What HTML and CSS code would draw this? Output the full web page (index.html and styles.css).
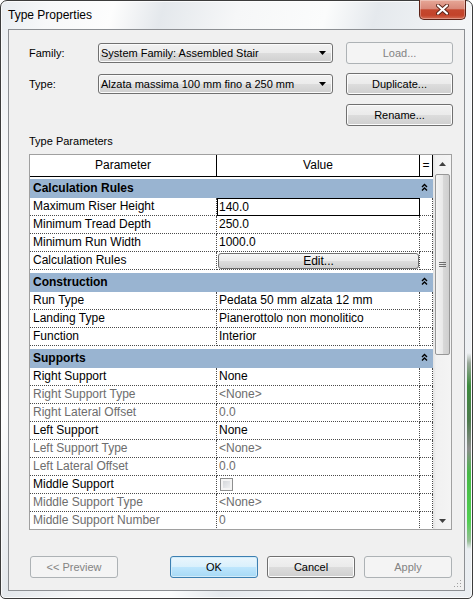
FILE: index.html
```html
<!DOCTYPE html>
<html lang="en">
<head>
  <meta charset="UTF-8">
  <title>Type Properties</title>
  <link rel="stylesheet" href="styles.css">
</head>
<body>

  <div class="window">
    <div class="titlebar">
      <span class="title">Type Properties</span>
      <button class="close-btn" aria-label="Close">
        <svg width="13" height="11" viewBox="0 0 13 11">
          <path d="M2 1.5 L11 9.5 M11 1.5 L2 9.5" stroke="#5a2418" stroke-width="4" stroke-linecap="round"/>
          <path d="M2 1.5 L11 9.5 M11 1.5 L2 9.5" stroke="#ffffff" stroke-width="2.2" stroke-linecap="round"/>
        </svg>
      </button>
    </div>

    <div class="client">
      <div class="top-form">
        <label>Family:</label>
        <div class="combo">
          <span>System Family: Assembled Stair</span>
          <svg width="7" height="4" viewBox="0 0 7 4"><path d="M0 0 H7 L3.5 4 Z" fill="#000"/></svg>
        </div>
        <button class="btn" disabled>Load...</button>

        <label>Type:</label>
        <div class="combo">
          <span>Alzata massima 100 mm fino a 250 mm</span>
          <svg width="7" height="4" viewBox="0 0 7 4"><path d="M0 0 H7 L3.5 4 Z" fill="#000"/></svg>
        </div>
        <button class="btn">Duplicate...</button>

        <span></span>
        <span></span>
        <button class="btn">Rename...</button>
      </div>

      <div class="section-label">Type Parameters</div>

      <div class="grid">
        <div class="grid-table">
          <div class="grid-head">
            <div class="hcell c1">Parameter</div>
            <div class="hcell c2">Value</div>
            <div class="hcell c3">=</div>
          </div>

          <div class="category">
            <span class="cat-name">Calculation Rules</span>
            <span class="cat-toggle"><svg width="7" height="8" viewBox="0 0 7 8"><path d="M1 4 L3.5 1.5 L6 4 M1 7.5 L3.5 5 L6 7.5" stroke="#000" stroke-width="1.4" fill="none"/></svg></span>
          </div>
          <div class="row"><div class="cell c1">Maximum Riser Height</div><div class="cell c2 editing">140.0</div><div class="cell c3"></div></div>
          <div class="row"><div class="cell c1">Minimum Tread Depth</div><div class="cell c2">250.0</div><div class="cell c3"></div></div>
          <div class="row"><div class="cell c1">Minimum Run Width</div><div class="cell c2">1000.0</div><div class="cell c3"></div></div>
          <div class="row"><div class="cell c1">Calculation Rules</div><div class="cell c2 has-btn"><button class="cell-btn">Edit...</button></div><div class="cell c3"></div></div>

          <div class="category">
            <span class="cat-name">Construction</span>
            <span class="cat-toggle"><svg width="7" height="8" viewBox="0 0 7 8"><path d="M1 4 L3.5 1.5 L6 4 M1 7.5 L3.5 5 L6 7.5" stroke="#000" stroke-width="1.4" fill="none"/></svg></span>
          </div>
          <div class="row"><div class="cell c1">Run Type</div><div class="cell c2">Pedata 50 mm alzata 12 mm</div><div class="cell c3"></div></div>
          <div class="row"><div class="cell c1">Landing Type</div><div class="cell c2">Pianerottolo non monolitico</div><div class="cell c3"></div></div>
          <div class="row"><div class="cell c1">Function</div><div class="cell c2">Interior</div><div class="cell c3"></div></div>

          <div class="category">
            <span class="cat-name">Supports</span>
            <span class="cat-toggle"><svg width="7" height="8" viewBox="0 0 7 8"><path d="M1 4 L3.5 1.5 L6 4 M1 7.5 L3.5 5 L6 7.5" stroke="#000" stroke-width="1.4" fill="none"/></svg></span>
          </div>
          <div class="row"><div class="cell c1">Right Support</div><div class="cell c2">None</div><div class="cell c3"></div></div>
          <div class="row disabled"><div class="cell c1">Right Support Type</div><div class="cell c2">&lt;None&gt;</div><div class="cell c3"></div></div>
          <div class="row disabled"><div class="cell c1">Right Lateral Offset</div><div class="cell c2">0.0</div><div class="cell c3"></div></div>
          <div class="row"><div class="cell c1">Left Support</div><div class="cell c2">None</div><div class="cell c3"></div></div>
          <div class="row disabled"><div class="cell c1">Left Support Type</div><div class="cell c2">&lt;None&gt;</div><div class="cell c3"></div></div>
          <div class="row disabled"><div class="cell c1">Left Lateral Offset</div><div class="cell c2">0.0</div><div class="cell c3"></div></div>
          <div class="row"><div class="cell c1">Middle Support</div><div class="cell c2"><span class="check"></span></div><div class="cell c3"></div></div>
          <div class="row disabled"><div class="cell c1">Middle Support Type</div><div class="cell c2">&lt;None&gt;</div><div class="cell c3"></div></div>
          <div class="row disabled"><div class="cell c1">Middle Support Number</div><div class="cell c2">0</div><div class="cell c3"></div></div>
        </div>

        <div class="scrollbar">
          <div class="sb-arrow"><svg width="7" height="4" viewBox="0 0 7 4"><path d="M0 4 H7 L3.5 0 Z" fill="#404040"/></svg></div>
          <div class="sb-thumb">
            <svg width="7" height="6" viewBox="0 0 7 6"><path d="M0 0.5 H7 M0 2.5 H7 M0 4.5 H7" stroke="#6f6f6f" stroke-width="1"/></svg>
          </div>
          <div class="sb-space"></div>
          <div class="sb-arrow"><svg width="7" height="4" viewBox="0 0 7 4"><path d="M0 0 H7 L3.5 4 Z" fill="#404040"/></svg></div>
        </div>
      </div>

      <div class="bottom-bar">
        <button class="btn wide" disabled>&lt;&lt; Preview</button>
        <button class="btn wide btn-default push">OK</button>
        <button class="btn wide">Cancel</button>
        <button class="btn wide" disabled>Apply</button>
      </div>

      <svg class="grip" width="9" height="9" viewBox="0 0 9 9">
        <path d="M7 1h1v1h-1z M4 4h1v1h-1z M7 4h1v1h-1z M1 7h1v1h-1z M4 7h1v1h-1z M7 7h1v1h-1z" fill="#a0a0a0"/>
      </svg>
    </div>
  </div>

</body>
</html>
```

FILE: styles.css
```css
* {
  box-sizing: border-box;
}
body {
  margin: 0;
  font-family: "Liberation Sans", Arial, sans-serif;
  font-size: 11px;
  color: #000;
}

/* window frame */
.window {
  width: 473px;
  height: 599px;
  display: flex;
  flex-direction: column;
  padding: 0 7px 7px 7px;
  border: 1px solid #3c3c3c;
  border-radius: 7px 7px 5px 5px;
  box-shadow: inset 0 0 0 1px rgba(255,255,255,0.75);
  background:
    linear-gradient(180deg, transparent 0, transparent 352px, #9aa89a 362px, #3d8b3d 385px, #4d7a4d 420px, #8d8d8d 448px, #47b847 472px, #52cf52 520px, #96bd96 540px, transparent 548px) right 1px top 0 / 4px 100% no-repeat,
    linear-gradient(105deg, #e9edf1 0%, #f7f8f9 8%, #fdfdfd 18%, #e4e8ec 26%, #f6f7f8 38%, #fbfcfc 52%, #e5e9ed 60%, #f3f5f7 74%, #e9edf1 100%);
}
.titlebar {
  height: 28px;
  display: flex;
  align-items: flex-start;
}
.title {
  font-size: 12px;
  line-height: 16px;
  margin-top: 6px;
}
.close-btn {
  margin-left: auto;
  margin-top: -1px;
  margin-right: -1px;
  width: 47px;
  height: 20px;
  padding: 0;
  border: 1px solid #5b2217;
  border-top: none;
  border-radius: 0 0 5px 5px;
  background: linear-gradient(#e6a797 0%, #d9897a 45%, #c4472e 52%, #c3432a 80%, #d36d55 100%);
  box-shadow: inset 0 0 0 1px rgba(255,255,255,0.3);
  display: flex;
  align-items: center;
  justify-content: center;
}

/* client area */
.client {
  flex: 1;
  position: relative;
  background: #f0f0f0;
  border: 1px solid #8c8f93;
  padding: 0 11px 0 20px;
}
.top-form {
  display: grid;
  grid-template-columns: 69px 235px 120px;
  grid-auto-rows: 22px;
  row-gap: 9px;
  align-items: center;
  padding-top: 12px;
}
.top-form .btn {
  width: 107px;
  margin-left: 13px;
}
.combo {
  height: 20px;
  display: flex;
  align-items: center;
  justify-content: space-between;
  padding: 0 6px 0 2px;
  border: 1px solid #707070;
  border-radius: 3px;
  background: linear-gradient(#f2f2f2 0%, #ebebeb 50%, #dddddd 50%, #cfcfcf 100%);
  box-shadow: inset 0 0 0 1px #fbfbfb;
  white-space: nowrap;
}
.btn {
  height: 22px;
  padding: 0;
  border: 1px solid #707070;
  border-radius: 3px;
  background: linear-gradient(#f2f2f2 0%, #ebebeb 50%, #dddddd 50%, #cfcfcf 100%);
  box-shadow: inset 0 0 0 1px #fcfcfc;
  font-family: "Liberation Sans", Arial, sans-serif;
  font-size: 11px;
  color: #000;
}
.btn:disabled {
  border-color: #adb2b5;
  background: #f4f4f4;
  box-shadow: none;
  color: #838383;
}
.btn-default {
  border-color: #3c7fb1;
  background: linear-gradient(#eaf6fd 0%, #d9f0fc 50%, #bee6fd 50%, #a7d9f5 100%);
  box-shadow: inset 0 0 0 1px #d2ecfa;
}
.section-label {
  margin: 8px 0 6px 0;
  line-height: 14px;
}

/* property grid */
.grid {
  display: flex;
  width: 423px;
  height: 376px;
  border: 1px solid #a0a0a0;
  background: #fff;
}
.grid-table {
  width: 403px;
  overflow: hidden;
  font-size: 12px;
}
.c1 { width: 187px; }
.c2 { width: 203px; }
.c3 { width: 13px; }
.grid-head {
  display: flex;
  height: 22px;
  border-bottom: 1px solid #000;
}
.hcell {
  border-right: 1px solid #000;
  text-align: center;
  line-height: 21px;
}
.category {
  display: flex;
  height: 19px;
  margin-top: 3px;
  background: #99b4d1;
  font-weight: bold;
  line-height: 19px;
}
.grid-head + .category {
  margin-top: 2px;
}
.cat-name {
  flex: 1;
  padding-left: 3px;
}
.cat-toggle {
  width: 13px;
  padding: 4px 0 0 1px;
  line-height: 0;
}
.row {
  display: flex;
  height: 18px;
}
.cell {
  height: 18px;
  border-right: 1px dotted #4a4a4a;
  border-bottom: 1px dotted #4a4a4a;
  line-height: 17px;
  white-space: nowrap;
  overflow: hidden;
}
.cell.c1 {
  padding-left: 3px;
}
.cell.c2 {
  padding-left: 2px;
}
.cell.editing {
  border: 1px solid #000;
  padding-left: 1px;
  line-height: 16px;
}
.cell.has-btn {
  padding-left: 0;
}
.cell-btn {
  display: block;
  width: 201px;
  height: 16px;
  margin: 1px 0 0 1px;
  padding: 0;
  border: 1px solid #707070;
  border-radius: 3px;
  background: linear-gradient(#f6f6f6 0%, #ebebeb 50%, #dddddd 50%, #cfcfcf 100%);
  font-family: "Liberation Sans", Arial, sans-serif;
  font-size: 12px;
  line-height: 14px;
  color: #000;
}
.row.disabled {
  color: #6d6d6d;
}
.check {
  display: block;
  width: 13px;
  height: 13px;
  margin: 2px 0 0 1px;
  border: 1px solid #8e8f8f;
  background: linear-gradient(135deg, #cdd0d4, #f6f7f8);
  box-shadow: inset 0 0 0 2px #f4f4f4;
}

/* scrollbar */
.scrollbar {
  width: 18px;
  display: flex;
  flex-direction: column;
  background: linear-gradient(90deg, #e2e2e2 0, #f1f1f1 3px, #f4f4f4 100%);
}
.sb-arrow {
  height: 17px;
  display: flex;
  align-items: center;
  justify-content: center;
}
.sb-thumb {
  height: 181px;
  margin: 2px 1px 0 2px;
  border: 1px solid #979797;
  border-radius: 2px;
  background: linear-gradient(90deg, #f4f4f4, #e9e9e9 50%, #d9d9d9 51%, #cfcfcf);
  display: flex;
  align-items: center;
  justify-content: center;
}
.sb-space {
  flex: 1;
}

/* dialog buttons */
.bottom-bar {
  display: flex;
  gap: 9px;
  margin-top: 26px;
  padding: 0 1px;
}
.wide {
  width: 88px;
}
.push {
  margin-left: auto;
}
.grip {
  position: absolute;
  right: 2px;
  bottom: 2px;
}
```
